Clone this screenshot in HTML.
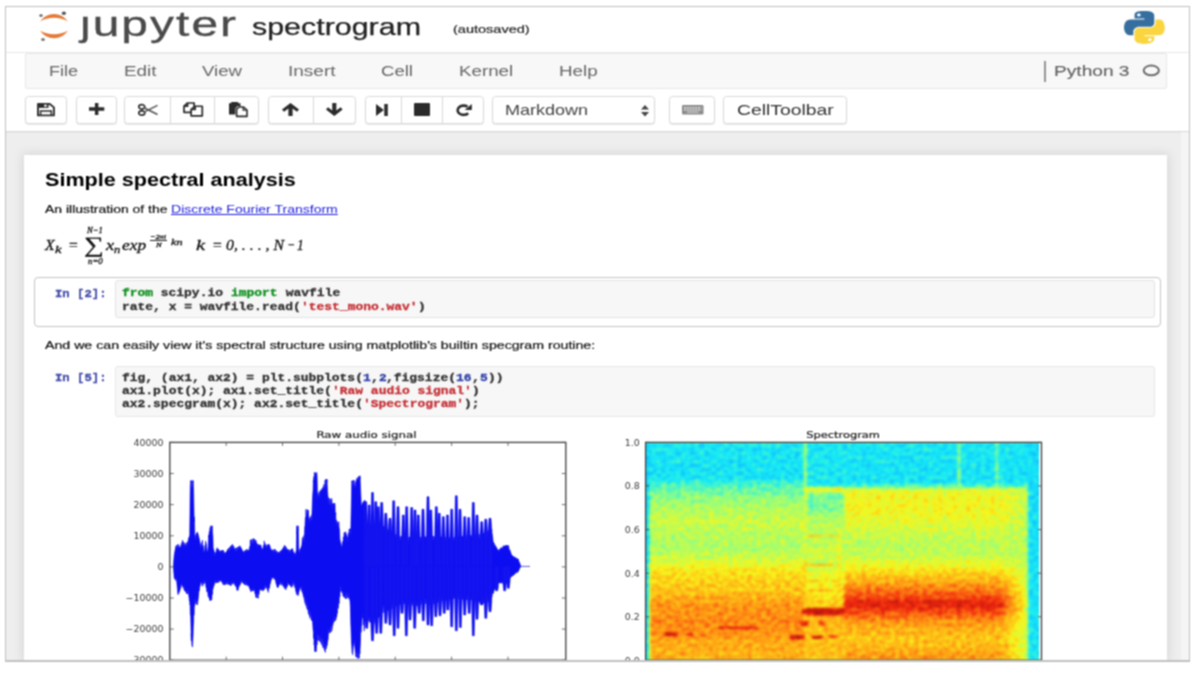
<!DOCTYPE html>
<html lang="en"><head><meta charset="utf-8"><title>spectrogram - Jupyter Notebook</title>
<style>
html,body{margin:0;padding:0;background:#fff;}
body{width:1200px;height:674px;position:relative;overflow:hidden;font-family:"Liberation Sans",sans-serif;}
.t{position:absolute;white-space:pre;line-height:1;transform-origin:0 0;display:block;}
.abs{position:absolute;}
.btn{position:absolute;box-sizing:border-box;border:1px solid #d9d9d9;background:#fff;border-radius:3.5px;box-shadow:0 1px 1px rgba(0,0,0,.09);}
.sep{position:absolute;width:1px;background:#d8d8d8;}
svg{position:absolute;overflow:visible;}
#shot{position:absolute;left:0;top:0;width:1200px;height:674px;filter:url(#softblur);}
</style></head><body><svg width="0" height="0" style="position:absolute"><defs><filter id="softblur" x="0" y="0" width="100%" height="100%" color-interpolation-filters="sRGB"><feConvolveMatrix order="3" kernelMatrix="1 2 1 2 4 2 1 2 1" divisor="16" edgeMode="duplicate" preserveAlpha="false"/></filter></defs></svg><div id="shot">
<div class="abs" id="frame" style="left:4.8px;top:6.3px;width:1185.5px;height:655.8px;box-sizing:border-box;border:1.9px solid #c0c0c0;"></div>
<header id="header">
<div class="abs" id="header-line" style="left:6px;top:51.5px;width:1183px;height:1px;background:#e9e9e9;"></div>
<svg id="jlogo" style="left:38px;top:10px" width="34" height="34" viewBox="38 10 34 34">
<path d="M40 21.6 A16.6 16.6 0 0 1 68 21.6 A28 28 0 0 0 40 21.6Z" fill="#e57a38"/>
<path d="M40 30.6 A16.6 16.6 0 0 0 68 30.6 A28 28 0 0 1 40 30.6Z" fill="#e57a38"/>
<ellipse cx="41" cy="15.6" rx="1.7" ry="1.3" fill="#666"/>
<ellipse cx="63.9" cy="13.2" rx="2.1" ry="1.7" fill="#555"/>
<ellipse cx="43" cy="39.6" rx="1.9" ry="1.5" fill="#777"/>
</svg>
<span class="t" style="left:79.50px;top:6px;font:normal normal 35px/1 'Liberation Sans',sans-serif;color:#4a4a4a;transform:scaleX(1.3678);letter-spacing:1.5px;-webkit-text-stroke:0.3px #4a4a4a;">jupyter</span>
<div class="abs" style="left:81px;top:7.8px;width:9px;height:7.4px;background:#fff;"></div>
<span class="t" style="left:252.00px;top:16px;font:normal normal 23.5px/1 'Liberation Sans',sans-serif;color:#222;transform:scaleX(1.2939);-webkit-text-stroke:0.25px #222;">spectrogram</span>
<span class="t" style="left:452.50px;top:24px;font:normal normal 11.2px/1 'Liberation Sans',sans-serif;color:#222;transform:scaleX(1.2968);-webkit-text-stroke:0.2px #222;">(autosaved)</span>
<svg id="pylogo" style="left:1123.8px;top:11.2px" width="40.8" height="32.8" viewBox="0 0 111 112" preserveAspectRatio="none">
<path fill="#366f9f" d="M54.9 0C50.3 0 46 .4 42.1 1.1 30.8 3.1 28.7 7.3 28.7 15v10.3h26.8v3.4H18.6c-7.8 0-14.6 4.7-16.7 13.6-2.5 10.2-2.6 16.6 0 27.2 1.9 8 6.4 13.6 14.2 13.6h9.3V70.8c0-8.8 7.6-16.6 16.7-16.6h26.8c7.4 0 13.4-6.2 13.4-13.6V15c0-7.2-6.1-12.7-13.4-13.9C64.3.3 59.5 0 54.9 0zM40.4 8.2c2.8 0 5 2.3 5 5.1s-2.2 5.1-5 5.1-5-2.3-5-5.1 2.2-5.1 5-5.1z"/>
<path fill="#fbd540" d="M85.6 28.7v11.9c0 9.2-7.8 17-16.7 17H42.1c-7.3 0-13.4 6.3-13.4 13.6v25.5c0 7.3 6.3 11.6 13.4 13.6 8.5 2.5 16.6 3 26.8 0 6.7-2 13.4-5.9 13.4-13.6V86.5H55.5v-3.4h40.2c7.8 0 10.7-5.4 13.4-13.6 2.8-8.4 2.7-16.5 0-27.2-1.9-7.8-5.6-13.6-13.4-13.6H85.6zM70.6 93.3c2.8 0 5 2.3 5 5.1s-2.2 5.1-5 5.1-5-2.3-5-5.1 2.2-5.1 5-5.1z"/>
</svg>
</header>
<nav id="menubar-container">
<div class="abs" id="menubar" style="left:25px;top:52.5px;width:1141.5px;height:36px;box-sizing:border-box;background:#f8f8f8;border:1px solid #e7e7e7;border-radius:2px;"></div>
<span class="t" style="left:49.40px;top:63px;font:normal normal 15.5px/1 'Liberation Sans',sans-serif;color:#666;transform:scaleX(1.1651);">File</span>
<span class="t" style="left:123.80px;top:63px;font:normal normal 15.5px/1 'Liberation Sans',sans-serif;color:#666;transform:scaleX(1.2130);">Edit</span>
<span class="t" style="left:202.00px;top:63px;font:normal normal 15.5px/1 'Liberation Sans',sans-serif;color:#666;transform:scaleX(1.2006);">View</span>
<span class="t" style="left:287.50px;top:63px;font:normal normal 15.5px/1 'Liberation Sans',sans-serif;color:#666;transform:scaleX(1.2253);">Insert</span>
<span class="t" style="left:380.50px;top:63px;font:normal normal 15.5px/1 'Liberation Sans',sans-serif;color:#666;transform:scaleX(1.1984);">Cell</span>
<span class="t" style="left:458.80px;top:63px;font:normal normal 15.5px/1 'Liberation Sans',sans-serif;color:#666;transform:scaleX(1.2096);">Kernel</span>
<span class="t" style="left:558.80px;top:63px;font:normal normal 15.5px/1 'Liberation Sans',sans-serif;color:#666;transform:scaleX(1.2140);">Help</span>
<div class="abs" style="left:1043.5px;top:60.5px;width:2px;height:21px;background:#949494;"></div>
<span class="t" style="left:1053.80px;top:63px;font:normal normal 15.5px/1 'Liberation Sans',sans-serif;color:#606060;transform:scaleX(1.2340);-webkit-text-stroke:0.12px;">Python 3</span>
<svg id="kernel-idle" style="left:1141px;top:63px" width="21" height="15" viewBox="1141 63 21 15"><ellipse cx="1151.3" cy="70.4" rx="7.6" ry="4.8" fill="none" stroke="#6c6c6c" stroke-width="2"/></svg>
</nav>
<div id="maintoolbar">
<div class="btn" style="left:25px;top:96.4px;width:42px;height:27.5px;"></div>
<div class="btn" style="left:75.6px;top:96.4px;width:41.400000000000006px;height:27.5px;"></div>
<div class="btn" style="left:124.4px;top:96.4px;width:134.99999999999997px;height:27.5px;"></div>
<div class="sep" style="left:169.5px;top:97.4px;height:25.5px;"></div>
<div class="sep" style="left:213.5px;top:97.4px;height:25.5px;"></div>
<div class="btn" style="left:268px;top:96.4px;width:87.60000000000002px;height:27.5px;"></div>
<div class="sep" style="left:312.5px;top:97.4px;height:25.5px;"></div>
<div class="btn" style="left:365px;top:96.4px;width:119px;height:27.5px;"></div>
<div class="sep" style="left:400.5px;top:97.4px;height:25.5px;"></div>
<div class="sep" style="left:441.9px;top:97.4px;height:25.5px;"></div>
<div class="btn" style="left:492px;top:96.4px;width:162.5px;height:27.5px;"></div>
<div class="btn" style="left:668.8px;top:96.4px;width:46.700000000000045px;height:27.5px;"></div>
<div class="btn" style="left:723px;top:96.4px;width:124px;height:27.5px;"></div>
<svg style="left:37.2px;top:102.5px" width="17.9" height="13.4" viewBox="0 0 18 14" preserveAspectRatio="none">
<path d="M1 1h11.8L17 4.6V13H1z" fill="#fff" stroke="#2b2b2b" stroke-width="1.9" stroke-linejoin="round"/>
<path d="M2 1.2h9.6v3.9H2z" fill="#2b2b2b"/><rect x="7.2" y="1.6" width="2.6" height="2.4" fill="#e8e8e8"/>
<path d="M3.6 8.3h10.8v4.4H3.6z" fill="#fff" stroke="#2b2b2b" stroke-width="1.5"/></svg>
<svg style="left:88.5px;top:103px" width="15.3" height="12" viewBox="0 0 15.3 12"><path fill="#2b2b2b" d="M5.9 0h3.5v4.3h5.9v3.4H9.4V12H5.9V7.7H0V4.3h5.9z"/></svg>
<svg style="left:137.5px;top:103.9px" width="20" height="11.9" viewBox="0 0 20 12" preserveAspectRatio="none" fill="none" stroke="#2b2b2b">
<ellipse cx="3.8" cy="2.9" rx="3" ry="2.2" stroke-width="1.7"/><ellipse cx="3.8" cy="9.1" rx="3" ry="2.2" stroke-width="1.7"/>
<path d="M6 3.8L19.5 10.6M6 8.2L19.5 1.4" stroke-width="1.6" stroke="#555"/></svg>
<svg style="left:182.5px;top:102.2px" width="20.3" height="14.8" viewBox="0 0 20 15" preserveAspectRatio="none" fill="#fff" stroke="#2b2b2b" stroke-width="1.7" stroke-linejoin="round">
<path d="M4.5 1H11v9.5H1V4.2z"/><path d="M4.5 1v3.2H1" fill="none"/>
<path d="M12 4.3h7V14H8V7.6z"/><path d="M12 4.3v3.3H8" fill="none"/></svg>
<svg style="left:227.8px;top:101.7px" width="20" height="15.3" viewBox="0 0 20 15.3" preserveAspectRatio="none">
<path fill="#2b2b2b" d="M1 1.2h11.5v3H9.3L7.4 6.4v6.2H1z"/><rect x="3.2" y="0" width="7" height="2.3" fill="#2b2b2b"/>
<path d="M11 5h4.6L19 8v6.4H8.6V7.2z" fill="#fff" stroke="#2b2b2b" stroke-width="1.6" stroke-linejoin="round"/><path d="M15.2 5v3.2H19" fill="none" stroke="#2b2b2b" stroke-width="1.3"/></svg>
<svg style="left:282px;top:103px" width="17" height="13" viewBox="0 0 17 13" preserveAspectRatio="none"><path fill="#2b2b2b" d="M8.5 0L17 6.6l-2 2.2-4.4-3.4V13H6.4V5.4L2 8.8 0 6.6z"/></svg>
<svg style="left:325.6px;top:103px" width="16.6" height="13" viewBox="0 0 17 13" preserveAspectRatio="none"><path fill="#2b2b2b" d="M8.5 13L17 6.4l-2-2.2-4.4 3.4V0H6.4v7.6L2 4.2 0 6.4z"/></svg>
<svg style="left:376.4px;top:103.6px" width="11.8" height="12" viewBox="0 0 12 12" preserveAspectRatio="none"><path fill="#2b2b2b" d="M0 0l8 6-8 6zM8.4 0H12v12H8.4z"/></svg>
<div class="abs" style="left:413.6px;top:103px;width:16.4px;height:12.6px;background:#2b2b2b;border-radius:1px;"></div>
<svg style="left:455px;top:103.6px" width="17" height="12.4" viewBox="0 0 17 12.4" preserveAspectRatio="none">
<path d="M13.2 9.2A6 4.6 0 1 1 12.6 2.8" fill="none" stroke="#2b2b2b" stroke-width="2.6"/><path fill="#2b2b2b" d="M16.8 0v6h-7z"/></svg>
<span class="t" style="left:505.00px;top:102px;font:normal normal 15px/1 'Liberation Sans',sans-serif;color:#444;transform:scaleX(1.1995);">Markdown</span>
<svg style="left:640.5px;top:104.5px" width="8" height="11.5" viewBox="0 0 8 11.5"><path fill="#444" d="M4 0l4 4.6H0zM4 11.5L0 6.9h8z"/></svg>
<svg style="left:681.5px;top:105px" width="21.5" height="9.5" viewBox="0 0 21.5 9.5"><rect width="21.5" height="9.5" rx="1.2" fill="#8c8c8c"/>
<path d="M2 2.6h17.5M2 4.8h17.5" stroke="#eee" stroke-width="1.2" stroke-dasharray="1.9 0.9"/><path d="M5 7.1h11.5" stroke="#ddd" stroke-width="1"/></svg>
<span class="t" style="left:737.00px;top:102px;font:normal normal 15.3px/1 'Liberation Sans',sans-serif;color:#333;transform:scaleX(1.2647);">CellToolbar</span>
</div>
<main id="notebook">
<div class="abs" id="site" style="left:6px;top:130.8px;width:1183px;height:530px;background:#eeeeee;box-shadow:inset 0 2px 2px -1px rgba(0,0,0,.12);"></div>
<div class="abs" style="left:1180.5px;top:132px;width:8px;height:528.5px;background:#f5f5f5;"></div>
<div class="abs" id="notebook-container" style="left:24px;top:155px;width:1143px;height:506px;background:#fff;box-shadow:0 0 9px 1px rgba(87,87,87,.17);"></div>
<span class="t" style="left:44.50px;top:171px;font:normal bold 18.7px/1 'Liberation Sans',sans-serif;color:#000;transform:scaleX(1.1554);">Simple spectral analysis</span>
<span class="t" style="left:44.50px;top:204px;font:normal normal 11.2px/1 'Liberation Sans',sans-serif;color:#111;transform:scaleX(1.2466);-webkit-text-stroke:0.2px #111;">An illustration of the </span>
<span class="t" style="left:171.00px;top:204px;font:normal normal 11.2px/1 'Liberation Sans',sans-serif;color:#1a1ae0;transform:scaleX(1.2538);text-decoration:underline;">Discrete Fourier Transform</span>
<div class="abs" id="cell1" style="left:33.9px;top:277px;width:1127.3px;height:50.4px;box-sizing:border-box;border:1.4px solid #c4c4c4;border-radius:4px;"></div>
<div class="abs" style="left:115.2px;top:280.3px;width:1039.4px;height:37.8px;box-sizing:border-box;background:#f7f7f7;border:1px solid #e3e3e3;border-radius:3px;"></div>
<div class="abs" style="left:115.2px;top:365.8px;width:1039.4px;height:50.9px;box-sizing:border-box;background:#f7f7f7;border:1px solid #e6e6e6;border-radius:3px;"></div>
<span class="t" style="left:55.00px;top:290px;font:normal bold 10.2px/1 'Liberation Mono',monospace;color:#3f48a8;transform:scaleX(1.2043);-webkit-text-stroke:0.28px;">In [2]:</span>
<span class="t" style="left:121.90px;top:289px;font:normal bold 10.2px/1 'Liberation Mono',monospace;color:#109020;transform:scaleX(1.2711);-webkit-text-stroke:0.28px;">from</span>
<span class="t" style="left:153.02px;top:289px;font:normal bold 10.2px/1 'Liberation Mono',monospace;color:#303030;transform:scaleX(1.2711);-webkit-text-stroke:0.28px;"> scipy.io </span>
<span class="t" style="left:230.82px;top:289px;font:normal bold 10.2px/1 'Liberation Mono',monospace;color:#109020;transform:scaleX(1.2711);-webkit-text-stroke:0.28px;">import</span>
<span class="t" style="left:277.50px;top:289px;font:normal bold 10.2px/1 'Liberation Mono',monospace;color:#303030;transform:scaleX(1.2711);-webkit-text-stroke:0.28px;"> wavfile</span>
<span class="t" style="left:121.90px;top:303px;font:normal bold 10.2px/1 'Liberation Mono',monospace;color:#303030;transform:scaleX(1.2711);-webkit-text-stroke:0.28px;">rate, x = wavfile.read(</span>
<span class="t" style="left:300.84px;top:303px;font:normal bold 10.2px/1 'Liberation Mono',monospace;color:#c43036;transform:scaleX(1.2711);-webkit-text-stroke:0.28px;">'test_mono.wav'</span>
<span class="t" style="left:417.54px;top:303px;font:normal bold 10.2px/1 'Liberation Mono',monospace;color:#303030;transform:scaleX(1.2711);-webkit-text-stroke:0.28px;">)</span>
<span class="t" style="left:44.50px;top:340px;font:normal normal 11.0px/1 'Liberation Sans',sans-serif;color:#111;transform:scaleX(1.2876);-webkit-text-stroke:0.2px #111;">And we can easily view it's spectral structure using matplotlib's builtin specgram routine:</span>
<span class="t" style="left:55.00px;top:374px;font:normal bold 10.2px/1 'Liberation Mono',monospace;color:#3f48a8;transform:scaleX(1.2043);-webkit-text-stroke:0.28px;">In [5]:</span>
<span class="t" style="left:121.90px;top:374px;font:normal bold 10.2px/1 'Liberation Mono',monospace;color:#303030;transform:scaleX(1.2711);-webkit-text-stroke:0.28px;">fig, (ax1, ax2) = plt.subplots(</span>
<span class="t" style="left:363.08px;top:374px;font:normal bold 10.2px/1 'Liberation Mono',monospace;color:#3040a8;transform:scaleX(1.2711);-webkit-text-stroke:0.28px;">1</span>
<span class="t" style="left:370.86px;top:374px;font:normal bold 10.2px/1 'Liberation Mono',monospace;color:#303030;transform:scaleX(1.2711);-webkit-text-stroke:0.28px;">,</span>
<span class="t" style="left:378.64px;top:374px;font:normal bold 10.2px/1 'Liberation Mono',monospace;color:#3040a8;transform:scaleX(1.2711);-webkit-text-stroke:0.28px;">2</span>
<span class="t" style="left:386.42px;top:374px;font:normal bold 10.2px/1 'Liberation Mono',monospace;color:#303030;transform:scaleX(1.2711);-webkit-text-stroke:0.28px;">,figsize(</span>
<span class="t" style="left:456.44px;top:374px;font:normal bold 10.2px/1 'Liberation Mono',monospace;color:#3040a8;transform:scaleX(1.2711);-webkit-text-stroke:0.28px;">16</span>
<span class="t" style="left:472.00px;top:374px;font:normal bold 10.2px/1 'Liberation Mono',monospace;color:#303030;transform:scaleX(1.2711);-webkit-text-stroke:0.28px;">,</span>
<span class="t" style="left:479.78px;top:374px;font:normal bold 10.2px/1 'Liberation Mono',monospace;color:#3040a8;transform:scaleX(1.2711);-webkit-text-stroke:0.28px;">5</span>
<span class="t" style="left:487.56px;top:374px;font:normal bold 10.2px/1 'Liberation Mono',monospace;color:#303030;transform:scaleX(1.2711);-webkit-text-stroke:0.28px;">))</span>
<span class="t" style="left:121.90px;top:387px;font:normal bold 10.2px/1 'Liberation Mono',monospace;color:#303030;transform:scaleX(1.2711);-webkit-text-stroke:0.28px;">ax1.plot(x); ax1.set_title(</span>
<span class="t" style="left:331.96px;top:387px;font:normal bold 10.2px/1 'Liberation Mono',monospace;color:#c43036;transform:scaleX(1.2711);-webkit-text-stroke:0.28px;">'Raw audio signal'</span>
<span class="t" style="left:472.00px;top:387px;font:normal bold 10.2px/1 'Liberation Mono',monospace;color:#303030;transform:scaleX(1.2711);-webkit-text-stroke:0.28px;">)</span>
<span class="t" style="left:121.90px;top:400px;font:normal bold 10.2px/1 'Liberation Mono',monospace;color:#303030;transform:scaleX(1.2711);-webkit-text-stroke:0.28px;">ax2.specgram(x); ax2.set_title(</span>
<span class="t" style="left:363.08px;top:400px;font:normal bold 10.2px/1 'Liberation Mono',monospace;color:#c43036;transform:scaleX(1.2711);-webkit-text-stroke:0.28px;">'Spectrogram'</span>
<span class="t" style="left:464.22px;top:400px;font:normal bold 10.2px/1 'Liberation Mono',monospace;color:#303030;transform:scaleX(1.2711);-webkit-text-stroke:0.28px;">);</span>
<span class="t" style="left:45.10px;top:237px;font:italic normal 15.3px/1 'Liberation Serif',serif;color:#111;transform:scaleX(1.0272);-webkit-text-stroke:0.3px #111;">X</span>
<span class="t" style="left:54.80px;top:245px;font:italic normal 10px/1 'Liberation Serif',serif;color:#111;transform:scaleX(1.4645);-webkit-text-stroke:0.3px #111;">k</span>
<span class="t" style="left:68.50px;top:237px;font:normal normal 15.3px/1 'Liberation Serif',serif;color:#111;transform:scaleX(1.0198);-webkit-text-stroke:0.3px #111;">=</span>
<span class="t" style="left:84.30px;top:234px;font:normal normal 22px/1 'Liberation Serif',serif;color:#111;transform:scaleX(1.2688);-webkit-text-stroke:0.3px #111;">∑</span>
<span class="t" style="left:86.70px;top:226px;font:italic normal 8.5px/1 'Liberation Serif',serif;color:#111;transform:scaleX(1.0092);-webkit-text-stroke:0.3px #111;">N−1</span>
<span class="t" style="left:87.80px;top:257px;font:italic normal 8.5px/1 'Liberation Serif',serif;color:#111;transform:scaleX(1.0326);-webkit-text-stroke:0.3px #111;">n=0</span>
<span class="t" style="left:106.00px;top:237px;font:italic normal 15.3px/1 'Liberation Serif',serif;color:#111;transform:scaleX(1.2076);-webkit-text-stroke:0.3px #111;">x</span>
<span class="t" style="left:114.40px;top:245px;font:italic normal 10px/1 'Liberation Serif',serif;color:#111;transform:scaleX(1.2400);-webkit-text-stroke:0.3px #111;">n</span>
<span class="t" style="left:122.10px;top:237px;font:italic normal 15.3px/1 'Liberation Serif',serif;color:#111;transform:scaleX(1.1351);-webkit-text-stroke:0.3px #111;">exp</span>
<span class="t" style="left:150.40px;top:234px;font:italic normal 7px/1 'Liberation Serif',serif;color:#111;transform:scaleX(1.1700);-webkit-text-stroke:0.3px #111;">−2πi</span>
<div class="abs" style="left:149.8px;top:240.2px;width:17.4px;height:0.9px;background:#222;"></div>
<span class="t" style="left:155.80px;top:242px;font:italic normal 7px/1 'Liberation Serif',serif;color:#111;transform:scaleX(1.1993);-webkit-text-stroke:0.3px #111;">N</span>
<span class="t" style="left:170.70px;top:238px;font:italic normal 9px/1 'Liberation Serif',serif;color:#111;transform:scaleX(1.3656);-webkit-text-stroke:0.3px #111;">kn</span>
<span class="t" style="left:196.20px;top:237px;font:italic normal 15.3px/1 'Liberation Serif',serif;color:#111;transform:scaleX(1.3254);-webkit-text-stroke:0.3px #111;">k</span>
<span class="t" style="left:212.50px;top:237px;font:normal normal 15.3px/1 'Liberation Serif',serif;color:#111;transform:scaleX(1.0198);-webkit-text-stroke:0.3px #111;">=</span>
<span class="t" style="left:226.00px;top:237px;font:italic normal 15.3px/1 'Liberation Serif',serif;color:#111;transform:scaleX(1.0338);-webkit-text-stroke:0.3px #111;">0, . . . , N</span>
<span class="t" style="left:288.00px;top:237px;font:normal normal 15.3px/1 'Liberation Serif',serif;color:#111;transform:scaleX(0.7533);-webkit-text-stroke:0.3px #111;">−</span>
<span class="t" style="left:297.00px;top:237px;font:italic normal 15.3px/1 'Liberation Serif',serif;color:#111;transform:scaleX(0.8758);-webkit-text-stroke:0.3px #111;">1</span>
<svg id="plots" style="left:0;top:0" width="1200" height="674" viewBox="0 0 1200 674">
<polygon points="173.3,566.4 173.3,566.4 173.9,558.8 174.2,555.1 174.5,553.2 175.1,550.1 175.7,546.6 175.8,546.4 176.3,545.5 176.7,548.0 176.9,545.1 177.5,548.8 178.0,544.4 178.1,545.8 178.3,544.2 178.7,547.9 179.3,546.1 179.9,547.6 180.0,547.5 180.5,547.4 181.1,544.2 181.7,546.7 181.7,542.4 182.3,543.6 182.5,540.0 182.9,546.2 183.5,541.7 184.1,543.5 184.2,542.8 184.7,547.5 185.0,544.2 185.3,547.3 185.9,543.3 186.5,547.1 186.7,542.5 187.1,542.4 187.5,541.7 187.7,545.6 188.3,539.2 188.3,539.2 188.9,537.4 189.5,535.9 189.7,534.7 190.0,511.3 190.1,499.6 190.3,485.7 190.7,480.5 191.3,483.0 191.3,480.5 191.9,489.1 192.5,480.5 193.1,482.6 193.3,480.5 193.7,493.8 193.7,494.9 194.2,522.0 194.3,516.8 194.9,537.5 195.0,535.0 195.5,540.5 196.1,533.5 196.7,533.5 197.3,531.9 197.5,533.3 197.9,533.3 198.5,535.7 199.1,538.1 199.2,538.5 199.7,540.5 200.3,544.2 200.8,545.0 200.9,548.8 201.5,543.0 202.1,541.7 202.5,540.0 202.7,546.0 203.3,545.6 203.9,551.7 204.2,551.6 204.5,551.3 205.0,545.8 205.1,546.4 205.7,540.9 205.8,543.1 206.3,543.3 206.9,550.8 207.5,551.7 208.1,547.3 208.7,535.0 208.7,537.3 209.3,531.5 209.9,530.4 210.0,527.7 210.3,534.2 210.5,525.8 211.1,527.8 211.7,525.8 211.7,531.4 212.3,525.8 212.5,531.7 212.9,536.6 213.3,551.9 213.5,548.8 214.1,551.3 214.7,552.4 215.0,556.1 215.3,552.5 215.9,553.2 216.5,549.0 217.0,551.3 217.1,547.6 217.7,552.2 218.3,548.9 218.3,549.5 218.9,549.6 219.5,552.1 220.0,550.8 220.1,553.6 220.7,550.7 220.8,551.5 221.3,550.5 221.9,550.8 222.5,550.2 223.1,552.2 223.3,550.0 223.7,552.5 224.3,551.9 224.9,554.4 225.0,553.3 225.5,553.1 226.1,551.7 226.7,551.9 227.3,549.9 227.5,550.0 227.9,549.0 228.3,551.4 228.5,548.2 229.1,551.3 229.7,547.0 230.3,548.6 230.8,545.8 230.9,547.9 231.5,545.2 232.1,549.1 232.5,544.2 232.7,548.5 233.3,545.5 233.3,545.9 233.9,546.5 234.5,550.8 235.0,548.3 235.1,550.9 235.7,548.0 235.8,548.8 236.3,547.7 236.9,551.5 237.5,547.1 238.1,549.0 238.7,546.5 239.2,549.4 239.3,546.2 239.9,546.0 240.0,545.8 240.5,547.0 241.1,547.8 241.7,549.2 241.7,548.8 242.3,550.8 242.9,550.9 243.3,554.3 243.5,551.5 244.1,553.0 244.7,550.6 245.0,552.8 245.3,550.2 245.9,552.1 246.5,549.3 246.7,549.4 247.1,549.3 247.7,551.6 248.3,549.7 248.3,551.7 248.9,549.9 249.2,550.2 249.5,547.1 250.1,546.1 250.3,540.0 250.7,541.8 250.8,539.7 251.3,543.8 251.9,539.1 252.5,544.5 253.1,538.5 253.3,541.4 253.7,538.6 254.2,543.1 254.3,539.0 254.9,543.6 255.5,539.8 255.8,540.3 256.1,540.7 256.7,543.5 257.3,543.7 257.5,548.4 257.9,544.3 258.3,545.8 258.5,544.4 259.1,545.8 259.7,544.7 260.0,546.0 260.3,544.9 260.8,545.0 260.9,545.2 261.5,547.9 262.1,548.8 262.5,550.3 262.7,548.9 263.3,547.0 263.3,545.4 263.9,546.3 264.2,540.8 264.5,543.8 265.1,543.2 265.7,548.1 265.8,545.0 266.3,549.1 266.9,544.7 267.5,545.3 268.1,544.4 268.3,548.3 268.7,544.3 269.2,547.5 269.3,544.5 269.9,546.5 270.0,546.1 270.5,549.6 271.1,548.7 271.7,551.8 271.7,550.0 272.3,551.7 272.5,549.8 272.9,552.4 273.5,549.5 274.1,552.1 274.7,549.2 275.0,551.0 275.3,549.5 275.9,552.8 276.5,550.7 277.1,551.8 277.5,551.7 277.7,553.7 278.3,552.5 278.3,554.6 278.9,552.1 279.5,553.3 280.0,551.2 280.1,554.2 280.7,550.7 281.3,550.3 281.7,550.0 281.9,551.3 282.5,548.6 283.1,548.5 283.7,546.6 284.3,550.0 284.7,545.0 284.9,549.5 285.5,546.2 285.8,548.8 286.1,547.1 286.7,549.8 287.3,548.9 287.5,550.4 287.9,549.3 288.3,552.6 288.5,549.5 289.1,553.0 289.7,549.9 290.0,553.6 290.3,549.8 290.9,550.4 291.5,549.0 291.7,550.0 292.1,548.6 292.5,550.4 292.7,548.8 293.3,553.4 293.9,551.6 294.2,555.2 294.5,553.0 295.0,556.1 295.1,553.9 295.7,553.3 296.3,550.9 296.3,552.5 296.7,525.8 296.9,534.5 297.5,525.8 298.1,530.8 298.3,525.8 298.7,544.6 298.8,549.8 299.3,553.0 299.9,549.1 300.0,549.8 300.5,548.6 300.8,549.3 301.1,546.6 301.7,546.6 302.3,538.8 302.5,539.9 302.9,536.9 303.5,542.5 304.1,535.1 304.2,540.9 304.7,526.7 305.0,525.7 305.3,517.4 305.8,517.1 305.9,509.2 306.5,517.5 307.1,509.6 307.5,513.2 307.7,509.8 308.3,518.7 308.3,510.0 308.9,520.4 309.2,518.3 309.5,523.7 310.0,517.2 310.1,517.4 310.7,516.3 311.3,521.3 311.7,514.9 311.9,515.8 312.5,497.5 313.1,489.6 313.3,480.1 313.7,482.4 313.7,476.7 314.2,481.1 314.3,472.5 314.7,474.6 314.9,472.5 315.5,475.3 316.1,472.5 316.3,476.3 316.7,472.5 317.0,474.5 317.3,485.0 317.5,499.5 317.9,492.9 318.5,496.9 319.1,491.7 319.7,498.5 320.0,490.8 320.3,493.1 320.9,489.7 321.5,491.0 322.1,488.2 322.7,488.8 323.3,486.7 323.3,487.9 323.9,484.5 324.5,490.4 325.1,480.0 325.3,487.6 325.7,479.2 326.3,485.9 326.7,479.2 326.9,482.5 327.0,479.2 327.5,490.4 328.0,496.7 328.1,505.5 328.7,497.5 329.2,505.5 329.3,498.3 329.9,502.4 330.0,499.2 330.5,507.0 331.1,498.6 331.7,505.3 331.7,498.5 332.3,510.4 332.5,503.3 332.9,506.4 333.3,503.3 333.5,505.7 334.1,503.3 334.7,503.4 335.0,503.3 335.3,515.1 335.8,512.5 335.9,521.8 336.5,519.8 336.7,525.5 337.1,521.7 337.5,528.9 337.7,521.7 338.3,527.1 338.9,521.7 339.2,528.8 339.5,529.0 340.0,541.4 340.1,540.4 340.7,544.2 340.8,542.9 341.3,545.8 341.7,545.8 341.9,548.0 342.5,541.4 343.1,542.0 343.3,537.0 343.7,539.6 344.2,532.5 344.3,536.7 344.9,532.1 345.5,533.7 345.8,531.7 346.1,536.8 346.7,534.3 347.3,539.5 347.5,536.7 347.9,541.7 348.3,532.9 348.5,538.5 349.1,529.5 349.2,530.1 349.7,528.9 350.0,536.5 350.3,528.6 350.8,530.5 350.9,524.5 351.5,495.7 351.7,480.8 352.1,482.0 352.5,480.6 352.7,486.4 353.3,480.3 353.9,486.2 354.2,480.0 354.5,489.2 355.0,485.0 355.1,488.2 355.7,482.2 355.8,483.2 356.3,479.8 356.7,481.1 356.9,478.1 357.5,480.7 358.1,476.9 358.3,479.9 358.7,476.5 359.3,476.2 359.7,476.0 359.9,479.5 360.0,475.8 360.5,486.9 360.8,494.0 361.1,500.7 361.3,504.9 361.7,505.7 362.3,503.4 362.5,504.0 362.9,502.4 363.3,503.4 363.5,501.5 364.1,505.2 364.2,500.7 364.7,508.3 364.8,500.0 365.0,534.9 365.3,528.3 365.9,535.1 366.5,528.0 367.1,532.3 367.7,527.8 368.3,533.8 368.9,527.6 369.5,533.9 370.1,527.3 370.7,532.4 371.3,527.1 371.9,530.6 372.5,526.8 373.1,530.6 373.3,526.7 373.7,530.9 374.3,526.5 374.9,530.4 375.5,526.2 376.1,527.3 376.7,526.0 377.3,530.4 377.9,525.8 378.5,532.2 379.1,525.5 379.7,529.9 380.3,525.3 380.9,532.9 381.5,525.0 381.7,526.7 382.1,525.3 382.7,533.9 383.3,526.1 383.9,527.0 384.5,526.8 385.1,535.0 385.7,527.6 386.3,532.3 386.9,528.4 387.5,533.0 388.1,529.2 388.7,530.9 389.3,530.0 389.9,531.7 390.0,530.4 390.5,535.7 391.1,531.1 391.7,536.0 392.3,531.9 392.9,537.0 393.5,532.7 394.1,540.3 394.7,533.5 395.3,537.0 395.9,534.3 396.5,540.4 397.1,535.0 397.7,539.4 398.3,535.8 398.3,536.1 398.9,535.9 399.5,539.4 400.1,536.0 400.7,540.4 401.3,536.1 401.9,536.9 402.5,536.2 403.1,540.2 403.7,536.4 404.3,537.3 404.9,536.5 405.5,537.2 406.1,536.6 406.7,539.3 406.7,536.7 407.3,540.4 407.9,536.8 408.5,542.9 409.1,536.9 409.7,537.3 410.3,537.0 410.9,537.5 411.5,537.1 412.1,543.3 412.7,537.3 413.3,540.6 413.9,537.4 414.5,539.4 415.0,537.5 415.1,542.5 415.7,537.4 416.3,542.1 416.9,537.3 417.5,538.7 418.1,537.2 418.7,539.3 419.3,537.1 419.9,541.6 420.5,537.0 421.1,542.0 421.7,536.8 422.3,543.1 422.9,536.7 423.3,538.4 423.5,536.6 424.1,541.5 424.7,536.5 425.3,538.0 425.9,536.4 426.5,540.7 427.1,536.3 427.7,540.9 428.3,536.2 428.9,539.9 429.5,536.1 430.1,536.5 430.7,535.9 431.3,536.6 431.7,535.8 431.9,536.0 432.5,535.9 433.1,540.6 433.7,536.0 434.3,538.5 434.9,536.2 435.5,536.7 436.1,536.3 436.7,537.0 437.3,536.4 437.9,542.0 438.5,536.5 439.1,540.7 439.7,536.6 440.0,541.6 440.3,536.7 440.9,536.9 441.5,536.8 442.1,539.3 442.7,536.9 443.3,542.5 443.9,537.1 444.5,539.9 445.1,537.2 445.7,540.7 446.3,537.3 446.9,542.6 447.5,537.4 448.1,542.3 448.3,537.5 448.7,540.6 449.3,537.4 449.9,539.6 450.5,537.3 451.1,539.0 451.7,537.2 452.3,537.8 452.9,537.0 453.5,541.5 454.1,536.9 454.7,539.5 455.3,536.8 455.9,542.5 456.5,536.7 456.7,542.6 457.1,536.6 457.7,538.1 458.3,536.5 458.9,541.4 459.5,536.4 460.1,537.4 460.7,536.3 461.3,537.3 461.9,536.1 462.5,536.9 463.1,536.0 463.7,537.2 464.3,535.9 464.9,536.9 465.0,535.8 465.5,539.3 466.1,535.7 466.7,542.3 467.3,535.6 467.9,536.2 468.5,535.5 469.1,540.4 469.7,535.4 470.3,536.0 470.9,535.2 471.5,537.9 472.1,535.1 472.7,539.4 473.3,535.0 473.3,537.8 473.9,534.9 474.5,538.9 475.1,534.8 475.7,539.8 476.3,534.7 476.9,540.6 477.5,534.6 478.1,536.7 478.7,534.5 479.3,539.9 479.9,534.3 480.5,537.3 481.1,534.2 481.7,539.0 481.7,534.1 482.3,539.4 482.9,533.5 483.5,533.5 484.1,532.9 484.7,539.6 485.3,532.3 485.9,536.1 486.5,531.8 487.1,537.8 487.7,531.1 488.3,532.5 488.9,530.5 489.5,531.2 490.0,530.0 490.1,532.2 490.7,529.6 491.3,532.8 491.7,529.2 491.9,532.7 492.5,535.4 493.1,541.2 493.3,541.6 493.7,543.0 494.3,543.3 494.9,546.6 495.5,545.3 496.1,547.8 496.7,547.3 497.3,550.1 497.9,549.3 498.3,553.0 498.5,549.9 499.1,550.8 499.7,548.9 500.3,548.4 500.9,547.9 501.5,548.6 502.1,546.9 502.7,549.3 503.3,545.9 503.3,546.1 503.9,545.7 504.5,546.3 505.1,545.5 505.7,545.5 506.3,545.3 506.7,545.7 506.9,545.2 507.5,546.8 508.1,545.0 508.3,545.8 508.7,546.1 509.3,550.6 509.9,549.7 510.5,552.1 511.1,553.3 511.7,556.1 511.7,555.0 512.3,556.0 512.9,555.8 513.5,557.2 514.1,556.5 514.7,558.0 515.3,557.3 515.9,558.5 516.5,558.0 517.1,559.1 517.7,558.8 518.3,560.2 518.3,559.2 518.9,561.5 519.5,562.3 520.1,564.2 520.7,565.5 520.8,565.9 520.8,566.4 520.7,566.6 520.1,567.9 519.5,568.6 518.9,570.5 518.3,571.0 518.3,571.7 517.7,572.0 517.1,572.6 516.5,571.8 515.9,573.5 515.3,572.5 514.7,574.4 514.1,573.9 513.5,575.3 512.9,575.6 512.3,576.2 511.7,576.0 511.7,576.7 511.1,575.6 510.5,578.2 509.9,576.7 509.3,579.8 508.7,578.2 508.3,581.1 508.1,578.8 507.5,582.2 506.9,580.2 506.7,583.3 506.3,582.4 505.7,583.3 505.1,583.3 504.5,583.3 503.9,580.4 503.3,583.3 503.3,580.2 502.7,583.3 502.1,581.0 501.5,583.3 500.9,582.4 500.3,583.3 499.7,582.6 499.1,583.3 498.5,582.3 498.3,583.3 497.9,583.7 497.3,585.4 496.7,583.0 496.1,587.8 495.5,584.2 494.9,590.2 494.3,587.9 493.7,592.6 493.3,592.1 493.1,593.9 492.5,592.1 491.9,596.9 491.7,595.7 491.3,598.4 490.7,596.8 490.1,601.4 490.0,601.2 489.5,601.8 488.9,595.9 488.3,602.0 487.7,594.7 487.1,602.2 486.5,597.3 485.9,602.5 485.3,598.0 484.7,602.7 484.1,596.6 483.5,603.0 482.9,595.2 482.3,603.2 481.7,598.0 481.7,603.3 481.1,599.8 480.5,602.9 479.9,600.6 479.3,602.4 478.7,598.8 478.1,601.9 477.5,598.1 476.9,601.4 476.3,595.8 475.7,600.9 475.1,599.0 474.5,600.5 473.9,597.0 473.3,600.0 473.3,595.5 472.7,600.0 472.1,596.3 471.5,600.0 470.9,599.7 470.3,600.0 469.7,595.3 469.1,600.0 468.5,594.1 467.9,600.0 467.3,592.9 466.7,600.0 466.1,598.6 465.5,600.0 465.0,597.6 464.9,600.0 464.3,593.6 463.7,599.7 463.1,597.9 462.5,599.5 461.9,595.2 461.3,599.3 460.7,593.8 460.1,599.0 459.5,596.6 458.9,598.8 458.3,593.3 457.7,598.5 457.1,592.2 456.7,598.3 456.5,596.5 455.9,598.5 455.3,598.0 454.7,598.7 454.1,596.3 453.5,599.0 452.9,593.4 452.3,599.2 451.7,595.7 451.1,599.4 450.5,592.7 449.9,599.7 449.3,596.2 448.7,599.9 448.3,596.4 448.1,600.0 447.5,598.7 446.9,600.3 446.3,599.7 445.7,600.5 445.1,595.3 444.5,600.8 443.9,597.8 443.3,601.0 442.7,597.3 442.1,601.2 441.5,595.9 440.9,601.5 440.3,598.3 440.0,601.7 439.7,601.0 439.1,602.0 438.5,595.8 437.9,602.5 437.3,602.5 436.7,603.0 436.1,595.6 435.5,603.5 434.9,596.4 434.3,603.9 433.7,599.3 433.1,604.4 432.5,599.3 431.9,604.9 431.7,603.8 431.3,604.9 430.7,604.6 430.1,604.7 429.5,599.3 428.9,604.4 428.3,598.3 427.7,604.2 427.1,597.1 426.5,604.0 425.9,598.1 425.3,603.7 424.7,600.9 424.1,603.5 423.5,595.7 423.3,603.3 422.9,603.4 422.3,603.7 421.7,598.7 421.1,604.2 420.5,600.8 419.9,604.7 419.3,597.8 418.7,605.2 418.1,605.1 417.5,605.7 416.9,602.0 416.3,606.1 415.7,599.0 415.1,606.6 415.0,598.8 414.5,606.5 413.9,604.7 413.3,606.0 412.7,600.5 412.1,605.5 411.5,600.6 410.9,605.0 410.3,602.8 409.7,604.5 409.1,596.8 408.5,604.1 407.9,600.2 407.3,603.6 406.7,598.1 406.7,603.3 406.1,597.1 405.5,603.6 404.9,602.5 404.3,603.8 403.7,600.0 403.1,604.0 402.5,599.3 401.9,604.3 401.3,601.4 400.7,604.5 400.1,602.7 399.5,604.8 398.9,601.2 398.3,605.0 398.3,605.0 397.7,605.4 397.1,597.2 396.5,606.1 395.9,606.0 395.3,606.8 394.7,600.3 394.1,607.5 393.5,605.5 392.9,608.3 392.3,599.7 391.7,609.0 391.1,604.3 390.5,609.7 390.0,605.2 389.9,610.0 389.3,602.2 388.7,610.5 388.1,609.1 387.5,611.0 386.9,608.9 386.3,611.5 385.7,610.4 385.1,612.0 384.5,610.8 383.9,612.4 383.3,604.3 382.7,612.9 382.1,604.6 381.7,613.3 381.5,606.2 380.9,614.4 380.3,614.0 379.7,616.1 379.1,616.4 378.5,617.8 377.9,617.9 377.3,619.4 376.7,616.3 376.1,621.1 375.5,621.0 374.9,622.8 374.3,616.6 373.7,624.5 373.3,619.4 373.1,624.8 372.5,618.4 371.9,623.9 371.3,620.6 370.7,622.9 370.1,621.4 369.5,621.9 368.9,616.4 368.3,621.0 367.7,618.3 367.1,620.0 366.5,615.9 365.9,619.1 365.3,611.0 365.0,618.3 364.8,623.6 364.7,626.3 364.2,628.1 364.1,631.1 363.5,617.6 363.3,625.0 362.9,612.8 362.5,618.3 362.3,612.0 361.7,626.3 361.3,625.5 361.1,632.3 360.8,626.9 360.5,641.7 360.0,650.2 359.9,653.7 359.7,650.9 359.3,658.3 358.7,656.5 358.3,658.3 358.1,649.4 357.5,658.3 356.9,652.6 356.7,657.5 356.3,654.6 355.8,656.6 355.7,654.6 355.1,650.1 355.0,648.3 354.5,644.7 354.2,639.9 353.9,644.1 353.3,646.5 352.7,654.9 352.5,651.3 352.1,652.7 351.7,645.0 351.5,643.7 350.9,625.9 350.8,624.9 350.3,606.0 350.0,601.7 349.7,596.5 349.2,599.6 349.1,597.3 348.5,597.9 348.3,591.9 347.9,597.8 347.5,593.5 347.3,598.2 346.7,591.6 346.1,599.0 345.8,592.8 345.5,598.8 344.9,596.8 344.3,597.6 344.2,595.5 343.7,597.0 343.3,591.0 343.1,596.0 342.5,591.9 341.9,592.8 341.7,589.4 341.3,591.2 340.8,584.9 340.7,591.1 340.1,592.3 340.0,596.7 339.5,595.0 339.2,603.3 338.9,601.9 338.3,608.5 337.7,605.2 337.5,613.3 337.1,613.3 336.7,616.7 336.5,615.1 335.9,619.7 335.8,615.7 335.3,620.7 335.0,615.4 334.7,621.5 334.1,619.8 333.5,623.1 333.3,617.8 332.9,625.5 332.5,619.4 332.3,628.5 331.7,630.9 331.7,631.6 331.1,624.7 330.5,632.4 330.0,629.5 329.9,632.8 329.3,629.0 329.2,633.3 328.7,628.6 328.1,639.4 328.0,638.8 327.5,642.8 327.0,645.6 326.9,646.2 326.7,644.1 326.3,648.9 325.7,642.7 325.3,652.5 325.1,643.0 324.5,650.8 323.9,646.0 323.3,648.3 323.3,639.5 322.7,647.1 322.1,637.3 321.5,644.7 320.9,641.8 320.3,642.3 320.0,634.8 319.7,641.5 319.1,638.3 318.5,640.7 317.9,633.6 317.5,640.0 317.3,638.2 317.0,645.0 316.7,639.7 316.3,651.7 316.1,645.6 315.5,651.7 314.9,645.3 314.7,651.7 314.3,642.5 314.2,645.0 313.7,634.6 313.7,638.4 313.3,631.5 313.1,630.2 312.5,621.0 311.9,620.9 311.7,618.3 311.3,620.1 310.7,611.0 310.1,618.5 310.0,613.4 309.5,616.7 309.2,609.1 308.9,614.7 308.3,611.4 308.3,612.7 307.7,603.0 307.5,610.0 307.1,608.9 306.5,607.3 305.9,599.6 305.8,605.5 305.3,597.1 305.0,603.3 304.7,600.2 304.2,600.0 304.1,595.1 303.5,597.3 302.9,593.2 302.5,593.3 302.3,589.8 301.7,591.5 301.1,585.4 300.8,589.4 300.5,588.2 300.0,587.5 299.9,587.3 299.3,591.0 298.8,592.0 298.7,594.0 298.3,594.8 298.1,595.7 297.5,593.5 296.9,595.1 296.7,590.4 296.3,593.5 296.3,592.7 295.7,590.8 295.1,585.1 295.0,587.8 294.5,585.4 294.2,584.2 293.9,580.9 293.3,585.3 292.7,582.0 292.5,586.4 292.1,585.7 291.7,587.5 291.5,583.5 290.9,586.7 290.3,584.3 290.0,585.8 289.7,583.9 289.1,584.9 288.5,581.5 288.3,584.2 287.9,582.1 287.5,586.1 287.3,585.1 286.7,588.0 286.1,586.9 285.8,590.0 285.5,585.0 284.9,588.8 284.7,586.1 284.3,588.1 283.7,584.9 283.1,586.6 282.5,581.8 281.9,585.4 281.7,581.3 281.3,585.0 280.7,580.9 280.1,584.2 280.0,583.7 279.5,585.0 278.9,584.7 278.3,587.0 278.3,585.8 277.7,588.0 277.5,586.9 277.1,587.0 276.5,584.7 275.9,583.0 275.3,578.8 275.0,580.0 274.7,576.8 274.1,579.1 273.5,577.8 272.9,577.9 272.5,577.3 272.3,578.1 271.7,577.7 271.7,580.0 271.1,579.4 270.5,583.5 270.0,581.6 269.9,585.5 269.3,588.0 269.2,588.7 268.7,586.0 268.3,592.5 268.1,587.3 267.5,590.8 266.9,585.5 266.3,588.4 265.8,583.6 265.7,587.7 265.1,587.8 264.5,589.3 264.2,585.2 263.9,590.1 263.3,588.0 263.3,590.8 262.7,590.6 262.5,590.6 262.1,589.1 261.5,590.4 260.9,587.6 260.8,590.2 260.3,588.2 260.0,590.0 259.7,588.5 259.1,594.5 258.5,594.4 258.3,598.3 257.9,596.5 257.5,598.1 257.3,592.1 256.7,597.8 256.1,592.5 255.8,597.5 255.5,593.9 254.9,593.8 254.3,586.8 254.2,590.8 253.7,588.2 253.3,591.0 253.1,588.8 252.5,591.2 251.9,588.8 251.3,591.5 250.8,591.6 250.7,591.4 250.3,589.5 250.1,590.0 249.5,587.1 249.2,587.8 248.9,586.4 248.3,585.8 248.3,585.3 247.7,585.7 247.1,584.1 246.7,585.4 246.5,581.8 245.9,585.2 245.3,581.2 245.0,585.0 244.7,584.5 244.1,584.3 243.5,580.3 243.3,583.7 242.9,580.0 242.3,583.0 241.7,579.8 241.7,582.5 241.1,579.8 240.5,584.4 240.0,583.2 239.9,585.4 239.3,584.5 239.2,586.7 238.7,586.8 238.1,590.4 237.5,590.0 236.9,590.4 236.3,586.0 235.8,586.7 235.7,582.2 235.1,585.7 235.0,582.5 234.5,584.9 233.9,581.5 233.3,583.3 233.3,581.7 232.7,584.0 232.5,580.5 232.1,584.6 231.5,581.5 230.9,585.8 230.8,583.6 230.3,585.6 229.7,583.2 229.1,585.0 228.5,581.6 228.3,584.6 227.9,583.3 227.5,584.2 227.3,581.1 226.7,584.3 226.1,582.2 225.5,584.6 225.0,581.5 224.9,584.7 224.3,584.7 223.7,584.9 223.3,581.2 223.1,584.6 222.5,581.9 221.9,582.6 221.3,580.2 220.8,580.8 220.7,580.0 220.1,581.3 220.0,578.5 219.5,581.7 218.9,579.9 218.3,582.5 218.3,580.6 217.7,582.7 217.1,579.8 217.0,582.8 216.5,582.4 215.9,583.1 215.3,579.7 215.0,583.3 214.7,581.1 214.1,586.0 213.5,585.6 213.3,588.4 212.9,587.7 212.5,594.2 212.3,592.5 211.7,599.8 211.7,598.5 211.1,600.3 210.5,597.8 210.3,600.7 210.0,597.4 209.9,600.6 209.3,597.2 208.7,597.8 208.7,594.2 208.1,596.4 207.5,589.9 206.9,592.0 206.3,587.9 205.8,586.7 205.7,582.7 205.1,583.0 205.0,580.0 204.5,583.3 204.2,583.8 203.9,584.3 203.3,581.4 202.7,586.3 202.5,585.5 202.1,585.7 201.5,582.3 200.9,582.7 200.8,582.1 200.3,585.2 199.7,587.5 199.2,590.8 199.1,589.4 198.5,596.5 197.9,601.2 197.5,605.0 197.3,604.3 196.7,604.5 196.1,600.8 195.5,603.7 195.0,597.0 194.9,604.7 194.3,607.4 194.2,614.7 193.7,616.1 193.7,621.6 193.3,627.2 193.1,635.0 192.5,647.1 191.9,645.3 191.3,633.6 191.3,640.8 190.7,616.5 190.3,614.1 190.1,603.7 190.0,605.0 189.7,600.7 189.5,601.5 188.9,596.5 188.3,593.3 188.3,589.4 187.7,593.6 187.5,587.8 187.1,593.9 186.7,590.1 186.5,593.9 185.9,590.2 185.3,591.9 185.0,589.7 184.7,590.9 184.2,586.5 184.1,589.9 183.5,585.0 182.9,587.5 182.5,585.4 182.3,586.3 181.7,582.7 181.7,585.0 181.1,585.6 180.5,589.1 180.0,588.5 179.9,591.0 179.3,591.9 178.7,593.5 178.3,590.7 178.1,594.8 178.0,594.3 177.5,590.0 176.9,583.8 176.7,581.7 176.3,578.1 175.8,580.6 175.7,577.8 175.1,579.6 174.5,577.6 174.2,578.3 173.9,573.8 173.3,566.4 173.3,566.4" fill="#0d0df2" stroke="#0d0df2" stroke-width="0.6" stroke-linejoin="round"/>
<path d="M364.8 501.7L366.8 501.7L367.6 528.2L367.6 566.4L364.1 566.4L364.1 528.2ZM368.2 505.0L370.2 505.0L370.9 527.5L370.9 566.4L367.4 566.4L367.4 527.5ZM371.5 492.5L373.5 492.5L374.2 526.8L374.2 566.4L370.8 566.4L370.8 526.8ZM374.8 501.7L376.8 501.7L377.6 526.2L377.6 566.4L374.1 566.4L374.1 526.2ZM377.3 506.7L379.3 506.7L380.1 525.7L380.1 566.4L376.6 566.4L376.6 525.7ZM380.7 502.5L382.7 502.5L383.4 525.0L383.4 566.4L379.9 566.4L379.9 525.0ZM384.8 513.3L386.8 513.3L387.6 527.7L387.6 566.4L384.1 566.4L384.1 527.7ZM389.0 518.3L391.0 518.3L391.8 530.4L391.8 566.4L388.2 566.4L388.2 530.4ZM392.7 500.8L394.7 500.8L395.4 532.8L395.4 566.4L391.9 566.4L391.9 532.8ZM397.0 506.7L399.0 506.7L399.8 535.6L399.8 566.4L396.2 566.4L396.2 535.6ZM402.3 515.0L404.3 515.0L405.1 536.3L405.1 566.4L401.6 566.4L401.6 536.3ZM405.7 506.7L407.7 506.7L408.4 536.7L408.4 566.4L404.9 566.4L404.9 536.7ZM410.7 507.5L412.7 507.5L413.4 537.2L413.4 566.4L409.9 566.4L409.9 537.2ZM414.0 510.0L416.0 510.0L416.8 537.5L416.8 566.4L413.2 566.4L413.2 537.5ZM417.3 515.0L419.3 515.0L420.1 537.2L420.1 566.4L416.6 566.4L416.6 537.2ZM422.0 509.2L424.0 509.2L424.8 536.7L424.8 566.4L421.2 566.4L421.2 536.7ZM427.0 496.7L429.0 496.7L429.8 536.2L429.8 566.4L426.2 566.4L426.2 536.2ZM429.8 510.0L431.8 510.0L432.6 535.9L432.6 566.4L429.1 566.4L429.1 535.9ZM435.3 506.7L437.3 506.7L438.1 536.3L438.1 566.4L434.6 566.4L434.6 536.3ZM438.2 513.3L440.2 513.3L440.9 536.6L440.9 566.4L437.4 566.4L437.4 536.6ZM442.3 516.7L444.3 516.7L445.1 537.0L445.1 566.4L441.6 566.4L441.6 537.0ZM446.5 515.0L448.5 515.0L449.2 537.4L449.2 566.4L445.8 566.4L445.8 537.4ZM450.7 509.2L452.7 509.2L453.4 537.2L453.4 566.4L449.9 566.4L449.9 537.2ZM455.3 495.8L457.3 495.8L458.1 536.7L458.1 566.4L454.6 566.4L454.6 536.7ZM459.0 509.2L461.0 509.2L461.8 536.3L461.8 566.4L458.2 566.4L458.2 536.3ZM463.7 516.7L465.7 516.7L466.4 535.9L466.4 566.4L462.9 566.4L462.9 535.9ZM467.7 517.5L469.7 517.5L470.4 535.5L470.4 566.4L466.9 566.4L466.9 535.5ZM472.3 502.5L474.3 502.5L475.1 535.0L475.1 566.4L471.6 566.4L471.6 535.0ZM476.0 515.0L478.0 515.0L478.8 534.6L478.8 566.4L475.2 566.4L475.2 534.6ZM480.7 521.7L482.7 521.7L483.4 534.2L483.4 566.4L479.9 566.4L479.9 534.2ZM484.8 519.2L486.8 519.2L487.6 532.1L487.6 566.4L484.1 566.4L484.1 532.1ZM489.0 518.3L491.0 518.3L491.8 530.0L491.8 566.4L488.2 566.4L488.2 530.0ZM365.7 628.3L367.7 628.3L368.4 619.7L368.4 566.4L364.9 566.4L364.9 619.7ZM371.5 640.8L373.5 640.8L374.2 624.3L374.2 566.4L370.8 566.4L370.8 624.3ZM375.7 633.3L377.7 633.3L378.4 620.3L378.4 566.4L374.9 566.4L374.9 620.3ZM379.8 633.3L381.8 633.3L382.6 614.5L382.6 566.4L379.1 566.4L379.1 614.5ZM384.8 623.3L386.8 623.3L387.6 611.7L387.6 566.4L384.1 566.4L384.1 611.7ZM389.0 625.0L391.0 625.0L391.8 610.0L391.8 566.4L388.2 566.4L388.2 610.0ZM393.2 635.8L395.2 635.8L395.9 607.5L395.9 566.4L392.4 566.4L392.4 607.5ZM397.0 628.3L399.0 628.3L399.8 605.2L399.8 566.4L396.2 566.4L396.2 605.2ZM401.0 613.3L403.0 613.3L403.8 604.3L403.8 566.4L400.2 566.4L400.2 604.3ZM405.3 635.8L407.3 635.8L408.1 603.4L408.1 566.4L404.6 566.4L404.6 603.4ZM409.0 620.0L411.0 620.0L411.8 604.7L411.8 566.4L408.2 566.4L408.2 604.7ZM413.7 628.3L415.7 628.3L416.4 606.5L416.4 566.4L412.9 566.4L412.9 606.5ZM418.2 613.3L420.2 613.3L420.9 605.0L420.9 566.4L417.4 566.4L417.4 605.0ZM422.3 620.8L424.3 620.8L425.1 603.3L425.1 566.4L421.6 566.4L421.6 603.3ZM427.0 625.0L429.0 625.0L429.8 604.3L429.8 566.4L426.2 566.4L426.2 604.3ZM430.7 625.8L432.7 625.8L433.4 605.0L433.4 566.4L429.9 566.4L429.9 605.0ZM434.8 616.7L436.8 616.7L437.6 603.3L437.6 566.4L434.1 566.4L434.1 603.3ZM439.0 615.8L441.0 615.8L441.8 601.7L441.8 566.4L438.2 566.4L438.2 601.7ZM443.2 613.3L445.2 613.3L445.9 600.8L445.9 566.4L442.4 566.4L442.4 600.8ZM446.8 610.0L448.8 610.0L449.6 600.1L449.6 566.4L446.1 566.4L446.1 600.1ZM450.7 626.7L452.7 626.7L453.4 599.3L453.4 566.4L449.9 566.4L449.9 599.3ZM455.3 630.8L457.3 630.8L458.1 598.4L458.1 566.4L454.6 566.4L454.6 598.4ZM459.3 627.5L461.3 627.5L462.1 599.1L462.1 566.4L458.6 566.4L458.6 599.1ZM463.7 615.0L465.7 615.0L466.4 599.9L466.4 566.4L462.9 566.4L462.9 599.9ZM468.2 613.3L470.2 613.3L470.9 600.0L470.9 566.4L467.4 566.4L467.4 600.0ZM472.3 635.8L474.3 635.8L475.1 600.0L475.1 566.4L471.6 566.4L471.6 600.0ZM476.0 619.2L478.0 619.2L478.8 601.5L478.8 566.4L475.2 566.4L475.2 601.5ZM480.7 605.0L482.7 605.0L483.4 603.3L483.4 566.4L479.9 566.4L479.9 603.3ZM484.8 618.3L486.8 618.3L487.6 602.5L487.6 566.4L484.1 566.4L484.1 602.5ZM489.0 611.7L491.0 611.7L491.8 601.7L491.8 566.4L488.2 566.4L488.2 601.7ZM495.7 590.8L497.7 590.8L498.4 586.7L498.4 566.4L494.9 566.4L494.9 586.7ZM503.7 590.8L505.7 590.8L506.4 583.3L506.4 566.4L502.9 566.4L502.9 583.3ZM507.3 588.3L509.3 588.3L510.1 581.1L510.1 566.4L506.6 566.4L506.6 581.1Z" fill="#1414f0" stroke="#1414f0" stroke-width="0.5"/>
<path d="M521 566.4H530" stroke="#3333dd" stroke-width="0.8"/>
<rect x="169.8" y="442.4" width="395.99999999999994" height="217.80000000000007" fill="none" stroke="#4a4a4a" stroke-width="1.4"/>
<path d="M169.8 442.4h4M565.8 442.4h-4M169.8 473.5h4M565.8 473.5h-4M169.8 504.6h4M565.8 504.6h-4M169.8 535.8h4M565.8 535.8h-4M169.8 566.9h4M565.8 566.9h-4M169.8 598.0h4M565.8 598.0h-4M169.8 629.1h4M565.8 629.1h-4M169.8 660.2h4M565.8 660.2h-4M226.2 442.4v3.5M226.2 660.2v-3.5M282.5 442.4v3.5M282.5 660.2v-3.5M338.9 442.4v3.5M338.9 660.2v-3.5M395.2 442.4v3.5M395.2 660.2v-3.5M451.6 442.4v3.5M451.6 660.2v-3.5M508.0 442.4v3.5M508.0 660.2v-3.5" stroke="#4a4a4a" stroke-width="0.8" fill="none"/>
<text x="163.4" y="445.6" font-family="'DejaVu Sans',sans-serif" font-size="9.1" text-anchor="end" fill="#3c3c3c" textLength="30.0" lengthAdjust="spacingAndGlyphs">40000</text>
<text x="163.4" y="476.7" font-family="'DejaVu Sans',sans-serif" font-size="9.1" text-anchor="end" fill="#3c3c3c" textLength="30.0" lengthAdjust="spacingAndGlyphs">30000</text>
<text x="163.4" y="507.8" font-family="'DejaVu Sans',sans-serif" font-size="9.1" text-anchor="end" fill="#3c3c3c" textLength="30.0" lengthAdjust="spacingAndGlyphs">20000</text>
<text x="163.4" y="539.0" font-family="'DejaVu Sans',sans-serif" font-size="9.1" text-anchor="end" fill="#3c3c3c" textLength="30.0" lengthAdjust="spacingAndGlyphs">10000</text>
<text x="163.4" y="570.1" font-family="'DejaVu Sans',sans-serif" font-size="9.1" text-anchor="end" fill="#3c3c3c" textLength="6.0" lengthAdjust="spacingAndGlyphs">0</text>
<text x="163.4" y="601.2" font-family="'DejaVu Sans',sans-serif" font-size="9.1" text-anchor="end" fill="#3c3c3c" textLength="37.9" lengthAdjust="spacingAndGlyphs">−10000</text>
<text x="163.4" y="632.3" font-family="'DejaVu Sans',sans-serif" font-size="9.1" text-anchor="end" fill="#3c3c3c" textLength="37.9" lengthAdjust="spacingAndGlyphs">−20000</text>
<text x="163.4" y="663.4" font-family="'DejaVu Sans',sans-serif" font-size="9.1" text-anchor="end" fill="#3c3c3c" textLength="37.9" lengthAdjust="spacingAndGlyphs">−30000</text>
<text x="366.5" y="437.8" font-family="'DejaVu Sans',sans-serif" font-size="9.0" text-anchor="middle" fill="#1a1a1a" stroke="#1a1a1a" stroke-width="0.2" textLength="100.2" lengthAdjust="spacingAndGlyphs">Raw audio signal</text>
<defs><linearGradient id="gL" x1="0" y1="0" x2="0" y2="1" gradientUnits="objectBoundingBox"><stop offset="-0.0018" stop-color="#5d5d5d"/><stop offset="0.1635" stop-color="#5c5c5c"/><stop offset="0.1910" stop-color="#6b6b6b"/><stop offset="0.2277" stop-color="#787878"/><stop offset="0.2874" stop-color="#858585"/><stop offset="0.3609" stop-color="#919191"/><stop offset="0.4252" stop-color="#8a8a8a"/><stop offset="0.4848" stop-color="#878787"/><stop offset="0.5399" stop-color="#939393"/><stop offset="0.5767" stop-color="#a1a1a1"/><stop offset="0.6042" stop-color="#a8a8a8"/><stop offset="0.6410" stop-color="#acacac"/><stop offset="0.6915" stop-color="#b2b2b2"/><stop offset="0.7328" stop-color="#bebebe"/><stop offset="0.8154" stop-color="#c3c3c3"/><stop offset="0.8613" stop-color="#c2c2c2"/><stop offset="0.9073" stop-color="#bbbbbb"/><stop offset="0.9624" stop-color="#b6b6b6"/><stop offset="0.9991" stop-color="#bbbbbb"/></linearGradient><linearGradient id="gR" x1="0" y1="0" x2="0" y2="1" gradientUnits="objectBoundingBox"><stop offset="-0.0018" stop-color="#5d5d5d"/><stop offset="0.1818" stop-color="#5c5c5c"/><stop offset="0.2048" stop-color="#737373"/><stop offset="0.2185" stop-color="#999999"/><stop offset="0.2645" stop-color="#9f9f9f"/><stop offset="0.3333" stop-color="#9d9d9d"/><stop offset="0.4022" stop-color="#939393"/><stop offset="0.4711" stop-color="#8a8a8a"/><stop offset="0.5216" stop-color="#8f8f8f"/><stop offset="0.5675" stop-color="#9e9e9e"/><stop offset="0.6042" stop-color="#adadad"/><stop offset="0.6547" stop-color="#bfbfbf"/><stop offset="0.6961" stop-color="#d1d1d1"/><stop offset="0.7374" stop-color="#dfdfdf"/><stop offset="0.7695" stop-color="#dbdbdb"/><stop offset="0.8062" stop-color="#c7c7c7"/><stop offset="0.8522" stop-color="#b8b8b8"/><stop offset="0.9073" stop-color="#b0b0b0"/><stop offset="0.9532" stop-color="#b8b8b8"/><stop offset="0.9991" stop-color="#c2c2c2"/></linearGradient><linearGradient id="gC" x1="0" y1="0" x2="0" y2="1" gradientUnits="objectBoundingBox"><stop offset="-0.0018" stop-color="#5e5e5e"/><stop offset="0.2002" stop-color="#5e5e5e"/><stop offset="0.2094" stop-color="#9e9e9e"/><stop offset="0.2231" stop-color="#999999"/><stop offset="0.2369" stop-color="#787878"/><stop offset="0.3012" stop-color="#787878"/><stop offset="0.3563" stop-color="#8a8a8a"/><stop offset="0.4711" stop-color="#8c8c8c"/><stop offset="0.5629" stop-color="#919191"/><stop offset="0.6318" stop-color="#9e9e9e"/><stop offset="0.7236" stop-color="#a8a8a8"/><stop offset="0.7557" stop-color="#b2b2b2"/><stop offset="0.7649" stop-color="#ededed"/><stop offset="0.7879" stop-color="#ededed"/><stop offset="0.8017" stop-color="#b8b8b8"/><stop offset="0.8843" stop-color="#b2b2b2"/><stop offset="0.9991" stop-color="#b2b2b2"/></linearGradient><linearGradient id="gE" x1="0" y1="0" x2="0" y2="1" gradientUnits="objectBoundingBox"><stop offset="-0.0018" stop-color="#585858"/><stop offset="0.9991" stop-color="#5d5d5d"/></linearGradient>
<linearGradient id="gFade" x1="0" y1="0" x2="1" y2="0"><stop offset="0" stop-color="#8c8c8c" stop-opacity="0"/><stop offset="1" stop-color="#8c8c8c" stop-opacity="0.85"/></linearGradient>
<clipPath id="spclip"><rect x="645.6" y="442.4" width="395.9" height="217.80000000000007"/></clipPath>
<filter id="jet" x="635.6" y="432.4" width="415.9" height="237.80000000000007" filterUnits="userSpaceOnUse" color-interpolation-filters="sRGB">
<feGaussianBlur in="SourceGraphic" stdDeviation="0.9 0.7" result="b"/>
<feTurbulence type="fractalNoise" baseFrequency="0.21 0.25" numOctaves="2" seed="11" result="n"/>
<feColorMatrix in="n" type="matrix" values="1 0 0 0 0  1 0 0 0 0  1 0 0 0 0  0 0 0 0 1" result="ng"/>
<feComposite in="b" in2="ng" operator="arithmetic" k1="0" k2="1" k3="0.23" k4="-0.115" result="v"/>
<feComponentTransfer in="v" result="j"><feFuncR type="table" tableValues="0.10 0.07 0.05 0.09 0.60 0.98 1 0.95 0.60"/><feFuncG type="table" tableValues="0.10 0.32 0.64 0.93 1.0 0.97 0.60 0.16 0.05"/><feFuncB type="table" tableValues="0.60 0.97 1 0.97 0.48 0.10 0.08 0.06 0.05"/></feComponentTransfer>
<feGaussianBlur in="j" stdDeviation="0.95"/>
</filter></defs>
<g clip-path="url(#spclip)"><g filter="url(#jet)"><rect x="633.6" y="430.4" width="419.9" height="241.80000000000007" fill="#808080"/><rect x="645.6" y="442.4" width="159.39999999999998" height="217.80000000000007" fill="url(#gL)"/><rect x="805" y="442.4" width="39" height="217.80000000000007" fill="url(#gC)"/><rect x="844" y="442.4" width="183.79999999999995" height="217.80000000000007" fill="url(#gR)"/><rect x="1000" y="487" width="27.8" height="173.20000000000005" fill="url(#gFade)"/><rect x="1027.8" y="442.4" width="25.700000000000045" height="217.80000000000007" fill="url(#gE)"/><rect x="633.6" y="442.4" width="15.6" height="217.80000000000007" fill="#545454"/><rect x="804.2" y="442" width="2.0" height="218" fill="#999999"/><rect x="958.0" y="442" width="1.9" height="46" fill="#919191"/><rect x="996.0" y="442" width="1.9" height="46" fill="#919191"/><rect x="838.5" y="530" width="1.6" height="130" fill="#adadad"/><rect x="804.2" y="560" width="2.2" height="100" fill="#b2b2b2"/><rect x="806" y="535" width="33" height="1.8" fill="#adadad"/><rect x="806" y="549" width="33" height="1.8" fill="#9e9e9e"/><rect x="806" y="564" width="33" height="1.8" fill="#b2b2b2"/><rect x="806" y="580" width="33" height="1.8" fill="#adadad"/><rect x="806" y="589.5" width="33" height="1.8" fill="#b8b8b8"/><rect x="665" y="632" width="13" height="4.5" rx="1.2" fill="#ebebeb"/><rect x="686.5" y="632.5" width="6.5" height="3.5" rx="1.2" fill="#e6e6e6"/><rect x="700" y="634" width="6" height="2.5" rx="1.2" fill="#d6d6d6"/><rect x="718" y="626.5" width="39" height="2.8" rx="1.2" fill="#e3e3e3"/><rect x="790" y="635" width="15" height="4.5" rx="1.2" fill="#ebebeb"/><rect x="812" y="635.5" width="11" height="3.5" rx="1.2" fill="#e3e3e3"/><rect x="828" y="635" width="10" height="3" rx="1.2" fill="#d9d9d9"/><rect x="800" y="621" width="8" height="5" rx="1.2" fill="#dedede"/><rect x="819" y="621" width="7" height="4.5" rx="1.2" fill="#d6d6d6"/><rect x="802" y="609.4" width="43" height="4.4" rx="1.2" fill="#ededed"/><rect x="845" y="600" width="155" height="8" rx="1.2" fill="#e3e3e3"/></g></g>
<rect x="1038.9" y="442.4" width="2.599999999999909" height="217.80000000000007" fill="#e8fbff"/>
<rect x="645.6" y="442.4" width="395.9" height="217.80000000000007" fill="none" stroke="#4a4a4a" stroke-width="1.4"/>
<path d="M645.6 442.4h3.5M1041.5 442.4h-3.5M645.6 486.0h3.5M1041.5 486.0h-3.5M645.6 529.6h3.5M1041.5 529.6h-3.5M645.6 573.2h3.5M1041.5 573.2h-3.5M645.6 616.8h3.5M1041.5 616.8h-3.5M645.6 660.4h3.5M1041.5 660.4h-3.5" stroke="#4a4a4a" stroke-width="0.8" fill="none"/>
<text x="639.8" y="445.8" font-family="'DejaVu Sans',sans-serif" font-size="9.1" text-anchor="end" fill="#3c3c3c" textLength="15.0" lengthAdjust="spacingAndGlyphs">1.0</text>
<text x="639.8" y="489.4" font-family="'DejaVu Sans',sans-serif" font-size="9.1" text-anchor="end" fill="#3c3c3c" textLength="15.0" lengthAdjust="spacingAndGlyphs">0.8</text>
<text x="639.8" y="533.0" font-family="'DejaVu Sans',sans-serif" font-size="9.1" text-anchor="end" fill="#3c3c3c" textLength="15.0" lengthAdjust="spacingAndGlyphs">0.6</text>
<text x="639.8" y="576.6" font-family="'DejaVu Sans',sans-serif" font-size="9.1" text-anchor="end" fill="#3c3c3c" textLength="15.0" lengthAdjust="spacingAndGlyphs">0.4</text>
<text x="639.8" y="620.2" font-family="'DejaVu Sans',sans-serif" font-size="9.1" text-anchor="end" fill="#3c3c3c" textLength="15.0" lengthAdjust="spacingAndGlyphs">0.2</text>
<text x="639.8" y="663.8" font-family="'DejaVu Sans',sans-serif" font-size="9.1" text-anchor="end" fill="#3c3c3c" textLength="15.0" lengthAdjust="spacingAndGlyphs">0.0</text>
<text x="843.1" y="437.8" font-family="'DejaVu Sans',sans-serif" font-size="9.0" text-anchor="middle" fill="#1a1a1a" stroke="#1a1a1a" stroke-width="0.2" textLength="73.8" lengthAdjust="spacingAndGlyphs">Spectrogram</text>
</svg>
</main>
<div class="abs" style="left:4.8px;top:660.3px;width:1185.5px;height:1.8px;background:#c0c0c0;"></div>
<div class="abs" style="left:0;top:662.1px;width:1200px;height:13px;background:#fff;"></div>
</div></body></html>
